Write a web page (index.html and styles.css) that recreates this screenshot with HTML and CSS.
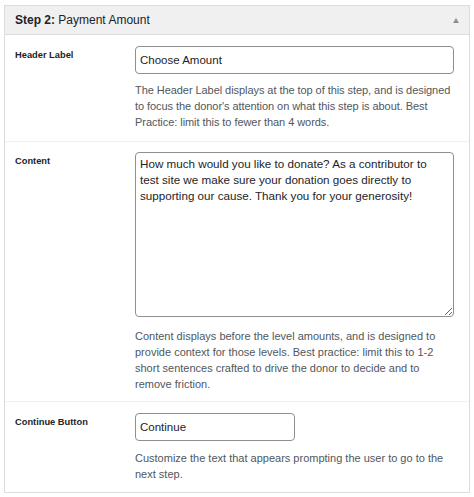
FILE: index.html
```html
<!DOCTYPE html>
<html>
<head>
<meta charset="utf-8">
<link rel="stylesheet" href="styles.css">
</head>
<body>
<div class="panel">
  <div class="panel-head">
    <h2 class="panel-title"><strong>Step 2:</strong> Payment Amount</h2>
    <span class="toggle"></span>
  </div>
  <div class="row row-first">
    <div class="label">Header Label</div>
    <div class="field">
      <input class="text-input wide" type="text" value="Choose Amount">
      <p class="desc desc-first">The Header Label displays at the top of this step, and is designed to focus the donor's attention on what this step is about. Best Practice: limit this to fewer than 4 words.</p>
    </div>
  </div>
  <div class="row row-content">
    <div class="label">Content</div>
    <div class="field">
      <textarea class="text-area">How much would you like to donate? As a contributor to test site we make sure your donation goes directly to supporting our cause. Thank you for your generosity!</textarea>
      <p class="desc desc-area">Content displays before the level amounts, and is designed to provide context for those levels. Best practice: limit this to 1-2 short sentences crafted to drive the donor to decide and to remove friction.</p>
    </div>
  </div>
  <div class="row row-last">
    <div class="label">Continue Button</div>
    <div class="field">
      <input class="text-input short" type="text" value="Continue">
      <p class="desc desc-last">Customize the text that appears prompting the user to go to the next step.</p>
    </div>
  </div>
</div>
</body>
</html>
```

FILE: styles.css
```css
* { box-sizing: border-box; }
html, body { margin: 0; padding: 0; background: #fff; }
body {
  font-family: "Liberation Sans", Arial, sans-serif;
  color: #1d2327;
  width: 474px;
  height: 497px;
}
.panel {
  margin: 5px 0 0 4px;
  width: 466px;
  border: 1px solid #dcdcde;
  background: #fff;
}
.panel-head {
  display: flex;
  align-items: center;
  justify-content: space-between;
  height: 29px;
  background: #f0f0f1;
  border-bottom: 1px solid #dcdcde;
  padding: 0 10px;
}
.panel-title {
  margin: 0;
  font-size: 12px;
  font-weight: normal;
  color: #1d2327;
}
.panel-title strong { font-weight: bold; }
.toggle {
  width: 0;
  height: 0;
  border-left: 3.5px solid transparent;
  border-right: 3.5px solid transparent;
  border-bottom: 5px solid #8c8f94;
  margin-right: 0;
}
.row {
  display: flex;
  padding-left: 10px;
  border-bottom: 1px solid #f0f0f1;
}
.row-first { padding-top: 11px; padding-bottom: 11px; }
.row-content { padding-top: 10px; padding-bottom: 9px; }
.row-last { padding-top: 11px; padding-bottom: 10px; border-bottom: none; }
.label {
  width: 120px;
  flex: none;
  font-size: 9.3px;
  line-height: 14px;
  font-weight: bold;
  padding-top: 2px;
  color: #1d2327;
}
.field { flex: none; width: 319px; }
.text-input {
  display: block;
  height: 28px;
  border: 1px solid #8c8f94;
  border-radius: 4px;
  padding: 0 4px;
  font-family: inherit;
  font-size: 11.5px;
  color: #1d2327;
  background: #fff;
}
.text-input.wide { width: 319px; }
.text-input.short { width: 160px; }
.text-area {
  display: block;
  width: 319px;
  height: 165px;
  border: 1px solid #8c8f94;
  border-radius: 4px;
  padding: 3px 8px 3px 4px;
  font-family: inherit;
  font-size: 11.65px;
  line-height: 16px;
  color: #1d2327;
  resize: vertical;
  overflow: hidden;
}
.desc {
  margin: 8px 3px 0 0;
  font-size: 11px;
  line-height: 16px;
  color: #50575e;
}
.desc-first { letter-spacing: -0.06px; }
.desc-area { margin-top: 11px; }
.desc-last { margin-top: 9px; }
```
